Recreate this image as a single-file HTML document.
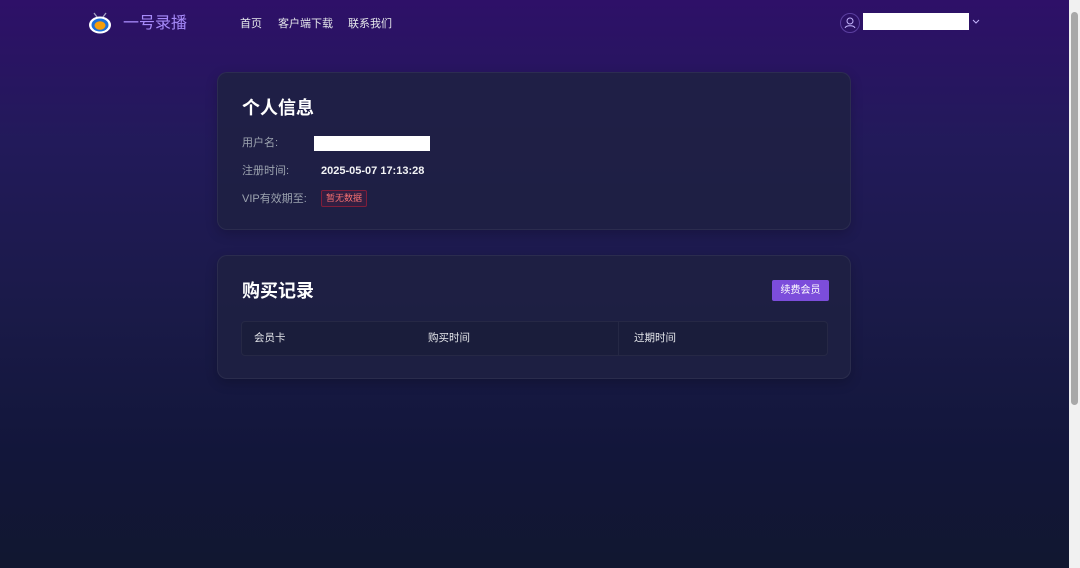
<!DOCTYPE html>
<html><head><meta charset="utf-8"><style>
*{margin:0;padding:0;box-sizing:border-box}
body{width:1080px;height:568px;overflow:hidden;font-family:"Liberation Sans","Noto Sans CJK SC",sans-serif;background:linear-gradient(180deg,#2e1068 0%,#221a5a 25%,#1a1a48 55%,#12163a 80%,#111730 100%);position:relative;color:#fff;line-height:1}
.sb{position:absolute;right:0;top:0;width:11px;height:568px;background:#f1f1f1}
.thumb{position:absolute;left:2px;top:12px;width:7px;height:393px;background:#a8a8a8;border-radius:4px}
.nav{position:absolute;top:0;left:0;width:1069px;height:45px}
.logo{position:absolute;left:88px;top:12px}
.brand{position:absolute;left:123px;top:16px;font-size:16px;color:#a78bfa}
.links{position:absolute;top:19px;font-size:11px;color:#e5e7eb}
.card{position:absolute;left:217px;width:634px;background:rgba(30,33,66,.85);border:1px solid rgba(255,255,255,.06);border-radius:10px;box-shadow:0 4px 12px rgba(0,0,0,.2)}
h2{position:absolute;left:24px;font-size:18px;font-weight:bold;line-height:1}
.lbl{position:absolute;left:24px;font-size:11px;color:#9ca3af}
.th{position:absolute;top:333px;font-size:10.5px;color:#e5e7eb}
</style></head><body>
<div class="nav">
 <svg class="logo" width="24" height="22" viewBox="0 0 24 22"><line x1="6" y1="1" x2="9" y2="5" stroke="#a3a3c2" stroke-width="1.3"/><line x1="18" y1="1" x2="15" y2="5" stroke="#a3a3c2" stroke-width="1.3"/><ellipse cx="12" cy="13" rx="11" ry="8.5" fill="#fff"/><ellipse cx="12" cy="13" rx="8.5" ry="6.5" fill="#1d6fd8"/><ellipse cx="12" cy="13.5" rx="5.5" ry="4.3" fill="#f59e0b"/></svg>
 <div class="brand">一号录播</div>
 <div class="links" style="left:240px">首页</div>
 <div class="links" style="left:278px">客户端下载</div>
 <div class="links" style="left:348px">联系我们</div>
 <div style="position:absolute;left:840px;top:13px;width:20px;height:20px;border:1px solid #5b3fa0;border-radius:50%"><svg width="18" height="18" viewBox="0 0 18 18"><circle cx="9" cy="7" r="3" fill="none" stroke="#c4b5fd" stroke-width="1"/><path d="M4 14c1-3 9-3 10 0" fill="none" stroke="#c4b5fd" stroke-width="1"/></svg></div>
 <div style="position:absolute;left:863px;top:13px;width:106px;height:17px;background:#fff"></div>
 <svg style="position:absolute;left:972px;top:19px" width="8" height="6" viewBox="0 0 8 6"><path d="M1 1l3 3 3-3" fill="none" stroke="#c4b5fd" stroke-width="1"/></svg>
</div>
<div class="card" style="top:72px;height:158px">
 <h2 style="top:26px">个人信息</h2>
 <div class="lbl" style="top:65px">用户名:</div>
 <div style="position:absolute;left:96px;top:63px;width:116px;height:15px;background:#fff"></div>
 <div class="lbl" style="top:93px">注册时间:</div>
 <div style="position:absolute;left:103px;top:93px;font-size:11px;color:#f3f4f6;font-weight:bold">2025-05-07 17:13:28</div>
 <div class="lbl" style="top:121px">VIP有效期至:</div>
 <div style="position:absolute;left:103px;top:117px;padding:3px 4px;font-size:9px;color:#f87171;border:1px solid #7f1d3a;border-radius:2px;background:rgba(127,29,58,.2)">暂无数据</div>
</div>
<div class="card" style="top:255px;height:124px">
 <h2 style="top:26px">购买记录</h2>
 <div style="position:absolute;left:554px;top:24px;width:57px;height:21px;background:#7c4ddb;border-radius:2px;font-size:10px;line-height:21px;text-align:center">续费会员</div>
 <div style="position:absolute;left:23px;top:65px;width:587px;height:35px;border:1px solid rgba(255,255,255,.05);border-radius:4px;background:rgba(25,28,55,.6)"><div style="position:absolute;left:376px;top:0;width:1px;height:33px;background:rgba(255,255,255,.05)"></div></div>
</div>
<div class="th" style="left:254px">会员卡</div>
<div class="th" style="left:428px">购买时间</div>
<div class="th" style="left:634px">过期时间</div>
<div class="sb"><div class="thumb"></div></div>
</body></html>
